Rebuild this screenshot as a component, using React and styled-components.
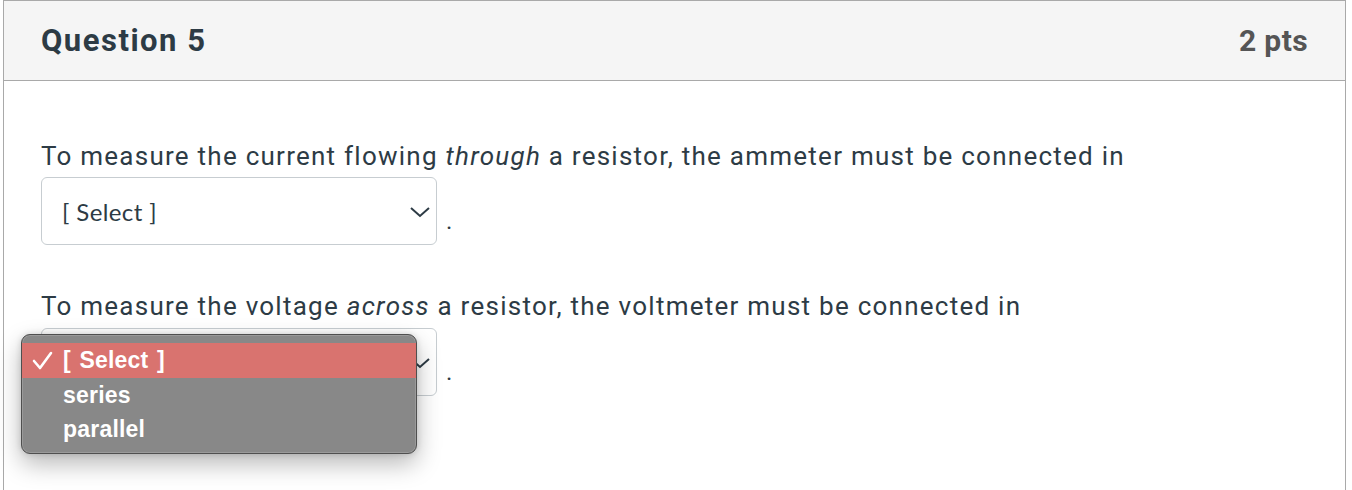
import React from 'react'
import styled, { createGlobalStyle } from 'styled-components';

const GlobalStyle = createGlobalStyle`
    body {
        margin: 0;
        background: #ffffff;
        font-family: Roboto, "Liberation Sans", sans-serif;
        overflow: hidden;
    }
`;

const Panel = styled.div`
    margin-left: 3px;
    width: 1343px;
    height: 490px;
    box-sizing: border-box;
    border: 1px solid #a9a9a9;
    border-bottom: none;
    background: #ffffff;
`;

const Header = styled.div`
    height: 80px;
    box-sizing: border-box;
    border-bottom: 1px solid #a9a9a9;
    background: #f5f5f5;
    display: flex;
    align-items: center;
    justify-content: space-between;
    padding: 0 37px 0 37px;

    h2 {
        margin: 0;
        font-size: 31px;
        font-weight: 700;
        letter-spacing: 1.5px;
        color: #2d3b45;
    }
    span {
        font-size: 30px;
        font-weight: 700;
        letter-spacing: 0.4px;
        color: #555555;
    }
`;

const Body = styled.div`
    padding: 57px 0 0 37px;
    display: flex;
    flex-direction: column;
`;

const Prompt = styled.p`
    margin: ${p => p.$first ? '0' : '43px'} 0 0 0;
    font-size: 26px;
    line-height: 36px;
    letter-spacing: 1.25px;
    color: #2d3b45;
`;

const AnswerRow = styled.div`
    margin-top: ${p => p.$gap}px;
    display: flex;
    align-items: flex-end;
    position: relative;
`;

const SelectBox = styled.div`
    width: 396px;
    height: 68px;
    box-sizing: border-box;
    border: 1px solid #c7cdd1;
    border-radius: 6px;
    background: #ffffff;
    display: flex;
    align-items: center;
    justify-content: space-between;
    padding: 0 5px 0 20px;
    font-family: Lato, "Open Sans", sans-serif;
    font-size: 24px;
    letter-spacing: 0.4px;
    color: #2d3b45;

    svg {
        margin-top: 2px;
    }
`;

const Dot = styled.span`
    margin: 0 0 12px 9px;
    font-size: 24px;
    line-height: 24px;
    color: #2d3b45;
`;

const Menu = styled.div`
    position: absolute;
    left: -20px;
    top: 6px;
    width: 396px;
    height: 120px;
    box-sizing: border-box;
    padding: 8px 0;
    background: #888888;
    border: 1px solid #4f4f4f;
    border-radius: 9px;
    box-shadow: inset 0 0 0 1px #9a9a9a, 0 10px 24px rgba(0, 0, 0, 0.28), 0 0 6px rgba(0, 0, 0, 0.15);
    overflow: hidden;
`;

const Option = styled.div`
    height: 34.5px;
    display: flex;
    align-items: center;
    padding: 1px 0 0 41px;
    box-sizing: border-box;
    position: relative;
    background: ${p => p.$active ? '#d9736f' : 'transparent'};
    color: #ffffff;
    font-family: "Liberation Sans", Arial, sans-serif;
    font-weight: 700;
    font-size: 23px;
    letter-spacing: 0.2px;
    word-spacing: 2px;

    svg {
        position: absolute;
        left: 10px;
        top: 8px;
    }
`;

const Chevron = () => (
    <svg width="22" height="14" viewBox="0 0 22 14">
        <polyline points="2,3 11,11 20,3" fill="none" stroke="#2d3b45" strokeWidth="2" />
    </svg>
);

const Check = () => (
    <svg width="22" height="20" viewBox="0 0 22 20">
        <polyline points="2,10 8,17 19,2" fill="none" stroke="#ffffff" strokeWidth="2.6" strokeLinecap="round" strokeLinejoin="round" />
    </svg>
);

function App() {
    return (
        <>
            <GlobalStyle />
            <Panel>
                <Header>
                    <h2>Question 5</h2>
                    <span>2 pts</span>
                </Header>
                <Body>
                    <Prompt $first>
                        To measure the current flowing <em>through</em> a resistor, the ammeter must be connected in
                    </Prompt>
                    <AnswerRow $gap={3}>
                        <SelectBox>[ Select ]<Chevron /></SelectBox>
                        <Dot>.</Dot>
                    </AnswerRow>
                    <Prompt>
                        To measure the voltage <em>across</em> a resistor, the voltmeter must be connected in
                    </Prompt>
                    <AnswerRow $gap={4}>
                        <SelectBox>[ Select ]<Chevron /></SelectBox>
                        <Dot>.</Dot>
                        <Menu>
                            <Option $active><Check />[ Select ]</Option>
                            <Option>series</Option>
                            <Option>parallel</Option>
                        </Menu>
                    </AnswerRow>
                </Body>
            </Panel>
        </>
    )
}

export default App
